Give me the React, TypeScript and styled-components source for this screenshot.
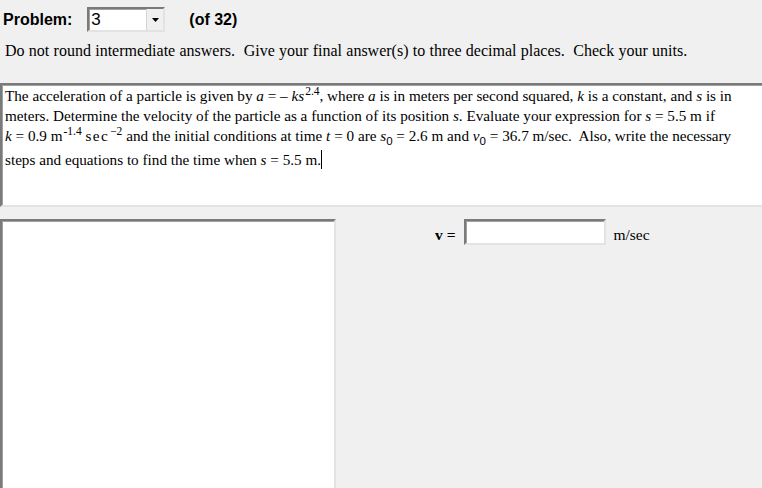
import React from 'react';
import styled, {createGlobalStyle, css} from 'styled-components';

const GlobalStyle = createGlobalStyle`
    html, body {
        margin: 0;
        padding: 0;
        background: #f0f0f0;
        overflow: hidden;
    }
`;

const inset = css`
    border-style: solid;
    border-width: 2px;
    border-color: #7a7a7a #e3e3e3 #e3e3e3 #7a7a7a;
    box-shadow: inset 1px 1px 0 #a0a0a0;
    background: #fff;
    box-sizing: border-box;
`;

const Page = styled.div`
    width: 762px;
    height: 488px;
    font-family: "Liberation Serif", "Times New Roman", serif;
    color: #000;
`;

const Header = styled.div`
    display: flex;
    align-items: center;
    height: 39px;
    padding-left: 3px;
    font-family: "Liberation Sans", Arial, sans-serif;
    font-weight: bold;
    font-size: 16px;
`;

const Label = styled.span<{$left?: number; $right?: number}>`
    margin-left: ${p => p.$left ?? 0}px;
    margin-right: ${p => p.$right ?? 0}px;
`;

const Select = styled.div`
    ${inset};
    width: 78px;
    height: 25px;
    display: flex;
    align-items: stretch;
    font-weight: normal;
    font-size: 17px;
`;

const SelectValue = styled.span`
    flex: 1;
    padding-left: 2px;
    line-height: 21px;
`;

const ArrowButton = styled.span`
    width: 16px;
    background: #f0f0f0;
    border-left: 1px solid #d4d4d4;
    display: flex;
    align-items: center;
    justify-content: center;
`;

const Instructions = styled.div`
    font-size: 16px;
    padding: 2px 0 0 5px;
    height: 42px;
    line-height: 20px;
    word-spacing: 0.3px;
`;

const ProblemBox = styled.div`
    ${inset};
    width: 764px;
    height: 124px;
    padding: 1px 3px;
    font-size: 15.2px;
    line-height: 20px;
`;

const Line = styled.div<{$extra?: number}>`
    white-space: nowrap;
    margin-top: ${p => p.$extra ?? 0}px;
`;

const Var = styled.i`
    font-style: italic;
`;

const Sup = styled.sup`
    font-size: 11.5px;
    line-height: 0;
    vertical-align: 6px;
    margin-left: 1px;
`;

const Sub = styled.sub`
    font-family: "Liberation Sans", Arial, sans-serif;
    font-size: 11.5px;
    line-height: 0;
    vertical-align: -4px;
`;

const Spaced = styled.span`
    letter-spacing: 1.4px;
`;

const Caret = styled.span`
    display: inline-block;
    width: 1px;
    height: 19px;
    background: #000;
    vertical-align: -4px;
`;

const Lower = styled.div`
    display: flex;
    align-items: flex-start;
    margin-top: 12px;
`;

const WorkBox = styled.div`
    ${inset};
    width: 336px;
    height: 290px;
`;

const AnswerRow = styled.div`
    display: flex;
    align-items: flex-start;
    margin-left: 99px;
    font-size: 15.5px;
    line-height: 20px;
`;

const AnswerText = styled.span<{$bold?: boolean}>`
    padding-top: 6px;
    font-weight: ${p => (p.$bold ? 'bold' : 'normal')};
    margin-right: ${p => (p.$bold ? 9 : 0)}px;
`;

const AnswerInput = styled.div`
    ${inset};
    width: 142px;
    height: 26px;
    margin-right: 7px;
`;

export default function App() {
    return (
        <Page>
            <GlobalStyle />
            <Header>
                <Label $right={15}>Problem:</Label>
                <Select>
                    <SelectValue>3</SelectValue>
                    <ArrowButton>
                        <svg width="7" height="4" viewBox="0 0 7 4">
                            <path d="M0 0h7L3.5 4z" fill="#000" />
                        </svg>
                    </ArrowButton>
                </Select>
                <Label $left={24}>(of 32)</Label>
            </Header>
            <Instructions>
                Do not round intermediate answers.&nbsp; Give your final answer(s) to three decimal places.&nbsp; Check your units.
            </Instructions>
            <ProblemBox>
                <Line>
                    The acceleration of a particle is given by <Var>a</Var> = – <Var>ks</Var><Sup>2.4</Sup>, where <Var>a</Var> is in meters per second squared, <Var>k</Var> is a constant, and <Var>s</Var> is in
                </Line>
                <Line>
                    meters. Determine the velocity of the particle as a function of its position <Var>s</Var>. Evaluate your expression for <Var>s</Var> = 5.5 m if
                </Line>
                <Line>
                    <Var>k</Var> = 0.9 m<Sup>-1.4</Sup> <Spaced>sec</Spaced><Sup>−2</Sup> and the initial conditions at time <Var>t</Var> = 0 are <Var>s</Var><Sub>0</Sub> = 2.6 m and <Var>v</Var><Sub>0</Sub> = 36.7 m/sec.&nbsp; Also, write the necessary
                </Line>
                <Line $extra={4}>
                    steps and equations to find the time when <Var>s</Var> = 5.5 m.<Caret />
                </Line>
            </ProblemBox>
            <Lower>
                <WorkBox />
                <AnswerRow>
                    <AnswerText $bold>v =</AnswerText>
                    <AnswerInput />
                    <AnswerText>m/sec</AnswerText>
                </AnswerRow>
            </Lower>
        </Page>
    );
}
